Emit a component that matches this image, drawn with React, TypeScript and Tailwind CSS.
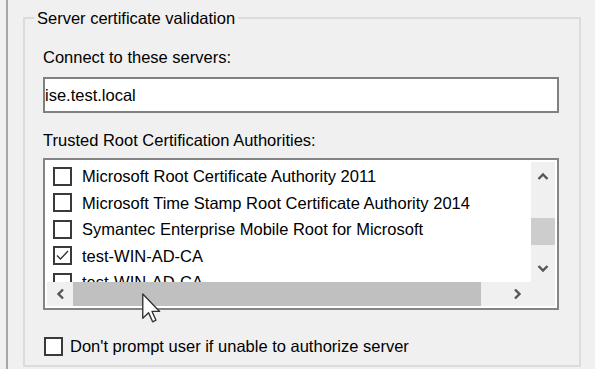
import React from "react";

function Box({ checked = false }: { checked?: boolean }) {
  return (
    <div className="w-[19px] h-[19px] shrink-0 border-2 border-[#3a3a3a] bg-white flex items-center justify-center">
      {checked && (
        <svg width="15" height="15" viewBox="0 0 15 15">
          <path d="M2 7.5 L5.5 11 L13 3" fill="none" stroke="#333" strokeWidth="1.4" />
        </svg>
      )}
    </div>
  );
}

function Chevron({ dir }: { dir: "up" | "down" | "left" | "right" }) {
  const d =
    dir === "up"
      ? "M1.5 7 L6 2.5 L10.5 7"
      : dir === "down"
      ? "M1.5 2 L6 6.5 L10.5 2"
      : dir === "left"
      ? "M7 1.5 L2.5 6 L7 10.5"
      : "M2 1.5 L6.5 6 L2 10.5";
  const horiz = dir === "left" || dir === "right";
  return (
    <svg width={horiz ? 9 : 12} height={horiz ? 12 : 9} viewBox={horiz ? "0 0 9 12" : "0 0 12 9"}>
      <path d={d} fill="none" stroke="#555" strokeWidth="2.4" />
    </svg>
  );
}

const items = [
  { label: "Microsoft Root Certificate Authority 2011", checked: false },
  { label: "Microsoft Time Stamp Root Certificate Authority 2014", checked: false },
  { label: "Symantec Enterprise Mobile Root for Microsoft", checked: false },
  { label: "test-WIN-AD-CA", checked: true },
  { label: "test-WIN-AD-CA", checked: false },
];

export default function App() {
  return (
    <div className="relative w-[595px] h-[369px] bg-[#f0f0f0] flex overflow-hidden text-black text-[16.5px] font-['Liberation_Sans',Arial,sans-serif]">
      <div className="w-[6px] shrink-0" />
      <div className="w-[2px] shrink-0 bg-[#a6a6a6]" />
      <fieldset className="ml-[15px] mt-[9px] w-[558px] h-[358px] shrink-0 border-2 border-[#dcdcdc] p-0 m-0">
        <legend className="ml-[9px] px-[3px] leading-[18px]">Server certificate validation</legend>
        <div className="pl-[18px] pt-[20px] flex flex-col">
          <div className="leading-[20px]">Connect to these servers:</div>
          <div className="mt-[10px] h-[36px] w-[516px] border-2 border-[#808080] bg-white flex items-center pl-[0px] leading-[20px]">
            ise.test.local
          </div>
          <div className="mt-[17px] leading-[20px]">Trusted Root Certification Authorities:</div>
          <div className="mt-[8px] h-[152px] w-[516px] border-2 border-[#848484] bg-white p-[2px] flex flex-col">
            <div className="h-[120px] flex">
              <div className="flex-1 overflow-hidden flex flex-col pt-[1px]">
                {items.map((it, i) => (
                  <div key={i} className="h-[26.5px] shrink-0 flex items-center pl-[6px] gap-[10px] whitespace-nowrap leading-[20px]">
                    <Box checked={it.checked} />
                    <span>{it.label}</span>
                  </div>
                ))}
              </div>
              <div className="w-[24px] bg-[#f0f0f0] flex flex-col">
                <div className="h-[28px] flex items-center justify-center">
                  <Chevron dir="up" />
                </div>
                <div className="flex-1">
                  <div className="mt-[28px] h-[27px] bg-[#cdcdcd]" />
                </div>
                <div className="h-[28px] flex items-center justify-center">
                  <Chevron dir="down" />
                </div>
              </div>
            </div>
            <div className="h-[24px] flex bg-[#f0f0f0]">
              <div className="w-[26px] flex items-center justify-center">
                <Chevron dir="left" />
              </div>
              <div className="flex-1">
                <div className="w-[408px] h-full bg-[#c0c0c0]" />
              </div>
              <div className="w-[28px] flex items-center justify-center">
                <Chevron dir="right" />
              </div>
              <div className="w-[24px]" />
            </div>
          </div>
          <div className="mt-[23px] h-[26px] flex items-center pl-[1px] gap-[7px] whitespace-nowrap leading-[20px]">
            <Box />
            <span>Don't prompt user if unable to authorize server</span>
          </div>
        </div>
      </fieldset>
      <svg
        className="absolute left-[142px] top-[293px] pointer-events-none"
        width="19"
        height="30"
        viewBox="0 0 12.5 19.5"
      >
        <path
          d="M0.5 0.5 L0.5 16.5 L4.3 12.8 L7 18.8 L9.2 17.8 L6.6 12 L11.6 12 Z"
          fill="#fff"
          stroke="#333"
          strokeWidth="0.9"
          strokeLinejoin="round"
        />
      </svg>
    </div>
  );
}
